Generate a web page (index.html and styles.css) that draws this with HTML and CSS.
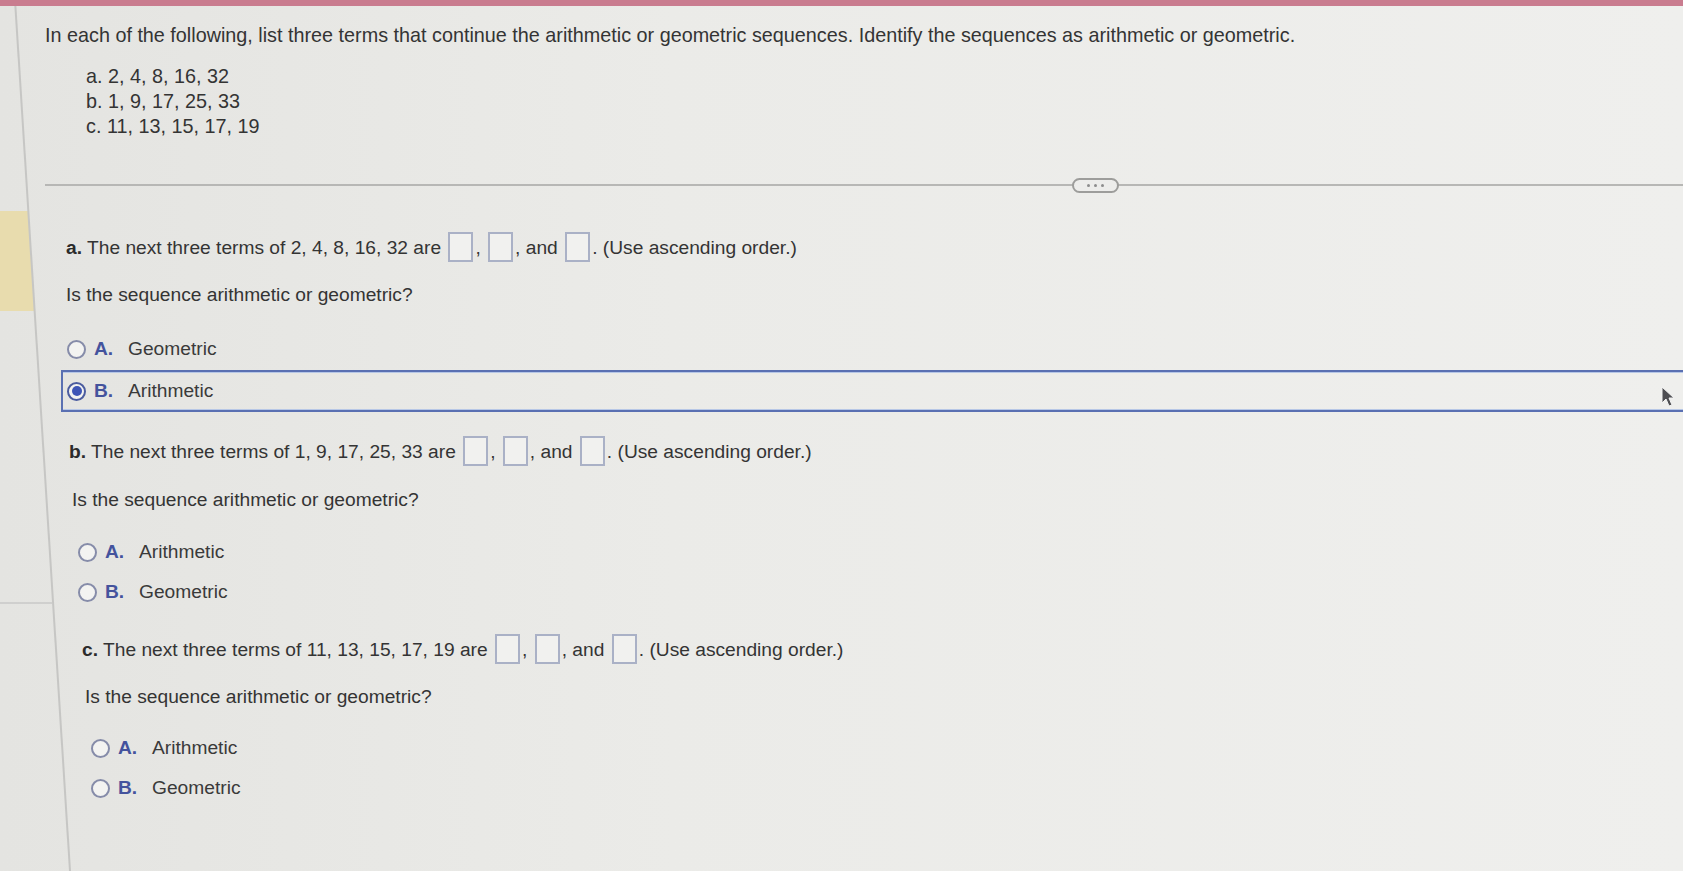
FILE: index.html
```html
<!DOCTYPE html>
<html lang="en">
<head>
    <meta charset="UTF-8">
    <meta name="viewport" content="width=device-width, initial-scale=1.0">
    <title>Sequences</title>
    <link rel="stylesheet" href="styles.css">
</head>
<body>
    <div class="topbar"></div>
    <div class="page">
        <!-- left margin of the player window -->
        <svg class="gutter" width="80" height="865" viewBox="0 0 80 865">
            <polygon points="0,205 28,205 35,305 0,305" fill="#e8dcae"/>
            <line x1="0" y1="597" x2="52" y2="597" stroke="#c9c9c7" stroke-width="1.5"/>
            <line x1="15" y1="-6" x2="70" y2="865" stroke="#c6c6c4" stroke-width="2"/>
        </svg>

        <div class="question">
            <p class="intro">In each of the following, list three terms that continue the arithmetic or geometric sequences. Identify the sequences as arithmetic or geometric.</p>
            <ul class="seqs">
                <li>a. 2, 4, 8, 16, 32</li>
                <li>b. 1, 9, 17, 25, 33</li>
                <li>c. 11, 13, 15, 17, 19</li>
            </ul>
        </div>

        <div class="divider">
            <span class="more"><i></i><i></i><i></i></span>
        </div>

        <div class="part part-a">
            <p class="prompt"><b>a.</b> The next three terms of 2, 4, 8, 16, 32 are <span class="box"></span>, <span class="box"></span>, and <span class="box"></span>. (Use ascending order.)</p>
            <p class="ask">Is the sequence arithmetic or geometric?</p>
            <div class="option"><span class="radio"></span><span class="letter">A.</span>Geometric</div>
            <div class="option selected"><span class="radio"></span><span class="letter">B.</span>Arithmetic</div>
        </div>

        <div class="part part-b">
            <p class="prompt"><b>b.</b> The next three terms of 1, 9, 17, 25, 33 are <span class="box"></span>, <span class="box"></span>, and <span class="box"></span>. (Use ascending order.)</p>
            <p class="ask">Is the sequence arithmetic or geometric?</p>
            <div class="option"><span class="radio"></span><span class="letter">A.</span>Arithmetic</div>
            <div class="option"><span class="radio"></span><span class="letter">B.</span>Geometric</div>
        </div>

        <div class="part part-c">
            <p class="prompt"><b>c.</b> The next three terms of 11, 13, 15, 17, 19 are <span class="box"></span>, <span class="box"></span>, and <span class="box"></span>. (Use ascending order.)</p>
            <p class="ask">Is the sequence arithmetic or geometric?</p>
            <div class="option"><span class="radio"></span><span class="letter">A.</span>Arithmetic</div>
            <div class="option"><span class="radio"></span><span class="letter">B.</span>Geometric</div>
        </div>

        <svg class="pointer" width="14" height="22" viewBox="0 0 14 22">
            <path d="M1 1 L1 17 L5 13 L8 20 L11 19 L8 12 L13 12 Z" fill="#4e4e52" stroke="#f2f2f2" stroke-width="1"/>
        </svg>
    </div>
</body>
</html>
```

FILE: styles.css
```css
html, body {
    margin: 0;
    padding: 0;
}

body {
    font-family: "Liberation Sans", Arial, sans-serif;
    font-size: 19.2px;
    color: #343434;
    background: linear-gradient(to right, #e4e4e1, #ebebe8 40%, #efefed);
    overflow: hidden;
    height: 871px;
}

.topbar {
    height: 6px;
    background-color: #c97c8f;
}

.page {
    position: relative;
    padding-top: 17px;
}

.gutter {
    position: absolute;
    left: 0;
    top: 0;
}

p {
    margin: 0;
}

.question {
    padding-left: 45px;
    font-size: 19.8px;
}

.intro {
    line-height: 25px;
}

.seqs {
    list-style-type: none;
    margin: 16px 0 0;
    padding: 0 0 0 41px;
    line-height: 25px;
}

.divider {
    margin: 38px 0 0 45px;
    height: 16px;
    display: flex;
    align-items: center;
    background: linear-gradient(#b7b7b5, #b7b7b5) center / 100% 2px no-repeat;
}

.more {
    margin-left: 1027px;
    width: 47px;
    height: 15px;
    box-sizing: border-box;
    border: 2px solid #9d9d9b;
    border-radius: 8px;
    background-color: #ededeb;
    display: flex;
    align-items: center;
    justify-content: center;
    gap: 4px;
}

.more i {
    width: 3px;
    height: 3px;
    border-radius: 50%;
    background-color: #8d8d8d;
}

.part {
    margin-top: 39px;
}

.part-a { padding-left: 58px; }
.part-b { padding-left: 69px; margin-top: 24px; }
.part-c { padding-left: 82px; margin-top: 22px; }

.prompt {
    height: 30px;
    line-height: 30px;
    white-space: nowrap;
}

.prompt b {
    color: #2b2b2b;
}

.part-a .prompt,
.part-a .ask {
    margin-left: 8px;
}

.box {
    display: inline-block;
    width: 25px;
    height: 30px;
    box-sizing: border-box;
    border: 2px solid #aab1c6;
    background-color: #f1f1ef;
    margin: 0 2px;
    vertical-align: -8px;
}

.ask {
    margin: 20px 0 19px 3px;
    line-height: 25px;
}

.part-a .ask {
    margin-bottom: 21px;
}

.part-b .ask {
    margin: 21px 0 20px 3px;
}

.option {
    display: flex;
    align-items: center;
    height: 40px;
    box-sizing: border-box;
    margin-left: 3px;
    padding-left: 4px;
    border: 2px solid transparent;
    border-right: none;
    color: #3a3a3a;
}

.part-a .option {
    height: 42px;
}

.option.selected {
    border-color: #5a70b2;
    box-shadow: inset 0 1px 0 #b7c7e6, inset 0 -1px 0 #b7c7e6;
}

.radio {
    width: 19px;
    height: 19px;
    box-sizing: border-box;
    border: 2px solid #868ca9;
    border-radius: 50%;
    background-color: #f3f3f1;
    margin-right: 8px;
    position: relative;
}

.selected .radio {
    border-color: #4b5c9f;
}

.selected .radio::after {
    content: "";
    position: absolute;
    left: 2.5px;
    top: 2.5px;
    width: 10px;
    height: 10px;
    border-radius: 50%;
    background-color: #3e55b6;
}

.letter {
    width: 34px;
    font-weight: bold;
    color: #44539d;
}

.pointer {
    position: absolute;
    left: 1661px;
    top: 380px;
}
```
